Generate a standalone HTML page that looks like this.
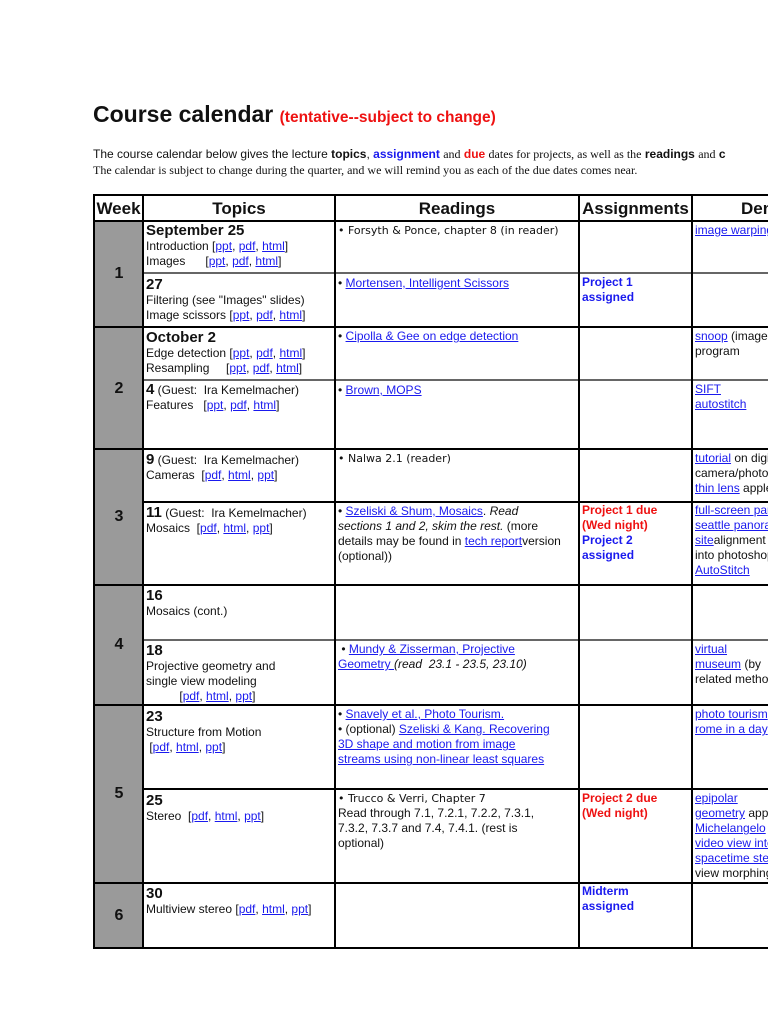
<!DOCTYPE html>
<html><head><meta charset="utf-8"><style>
html,body{margin:0;padding:0;overflow:hidden;width:768px;height:1024px}
#w{position:relative;width:768px;height:1024px;overflow:hidden;background:#fff;font-family:"Liberation Sans",sans-serif;color:#111}
.a{position:absolute;white-space:nowrap}
.t{font-size:12px;line-height:15px}
a{color:#1a1aee;text-decoration:underline}
.d{font-size:15px;font-weight:bold;line-height:17px}
.h{position:absolute;background:#000;height:2px}
.v{position:absolute;background:#000;width:2px}
.g{background:#666}
.wk{position:absolute;background:#9a9a9a;left:95px;width:48px}
.wn{position:absolute;left:95px;width:48px;text-align:center;font-weight:bold;font-size:16px}
.bl{color:#1a1aee;font-weight:bold}
.rd{color:#ee1111;font-weight:bold}
.hd{font-size:17px;font-weight:bold;text-align:center;position:absolute;top:199px}
</style></head><body><div id="w">
<div class="a" style="left:93px;top:101px;font-size:23px;font-weight:bold">Course calendar <span style="font-size:15.5px;color:#ee1111">(tentative--subject to change)</span></div>
<div class="a t" style="left:93px;top:147px">The course calendar below gives the lecture <b>topics</b>, <b style="color:#1a1aee">assignment</b> <span style="font-family:'Liberation Serif',serif">and</span> <b style="color:#ee1111">due</b> <span style="font-family:'Liberation Serif',serif">dates for projects, as well as the</span> <b>readings</b> <span style="font-family:'Liberation Serif',serif">and</span> <b>c</b></div>
<div class="a t" style="left:93px;top:163px;font-family:'Liberation Serif',serif">The calendar is subject to change during the quarter, and we will remind you as each of the due dates comes near.</div>

<div class="wk" style="top:221px;height:106px"></div>
<div class="wk" style="top:327px;height:122px"></div>
<div class="wk" style="top:449px;height:136px"></div>
<div class="wk" style="top:585px;height:120px"></div>
<div class="wk" style="top:705px;height:178px"></div>
<div class="wk" style="top:883px;height:65px"></div>
<div class="wn" style="top:265px">1</div>
<div class="wn" style="top:380px">2</div>
<div class="wn" style="top:508px">3</div>
<div class="wn" style="top:636px">4</div>
<div class="wn" style="top:785px">5</div>
<div class="wn" style="top:907px">6</div>

<div class="h" style="left:93px;width:675px;top:194px"></div>
<div class="h" style="left:93px;width:675px;top:220px"></div>
<div class="h g" style="left:143px;width:625px;top:272px"></div>
<div class="h" style="left:93px;width:675px;top:326px"></div>
<div class="h g" style="left:143px;width:625px;top:379px"></div>
<div class="h" style="left:93px;width:675px;top:448px"></div>
<div class="h" style="left:143px;width:625px;top:501px"></div>
<div class="h" style="left:93px;width:675px;top:584px"></div>
<div class="h g" style="left:143px;width:625px;top:639px"></div>
<div class="h" style="left:93px;width:675px;top:704px"></div>
<div class="h" style="left:143px;width:625px;top:788px"></div>
<div class="h" style="left:93px;width:675px;top:882px"></div>
<div class="h" style="left:93px;width:675px;top:947px"></div>
<div class="v" style="left:93px;top:194px;height:755px"></div>
<div class="v" style="left:142px;top:194px;height:755px"></div>
<div class="v" style="left:334px;top:194px;height:755px"></div>
<div class="v" style="left:578px;top:194px;height:755px"></div>
<div class="v" style="left:691px;top:194px;height:755px"></div>

<div class="hd" style="left:95px;width:47px">Week</div>
<div class="hd" style="left:144px;width:190px">Topics</div>
<div class="hd" style="left:336px;width:242px">Readings</div>
<div class="hd" style="left:580px;width:111px">Assignments</div>
<div class="hd" style="left:741px;width:60px;text-align:left">Demos</div>

<div class="a" style="left:146px;top:222px"><div class="d">September 25</div><div class="t">Introduction [<a>ppt</a>, <a>pdf</a>, <a>html</a>]<br>Images &nbsp;&nbsp;&nbsp;&nbsp;&nbsp;[<a>ppt</a>, <a>pdf</a>, <a>html</a>]</div></div>
<div class="a" style="left:146px;top:276px"><div class="d">27</div><div class="t">Filtering (see "Images" slides)<br>Image scissors [<a>ppt</a>, <a>pdf</a>, <a>html</a>]</div></div>
<div class="a" style="left:146px;top:329px"><div class="d">October 2</div><div class="t">Edge detection [<a>ppt</a>, <a>pdf</a>, <a>html</a>]<br>Resampling &nbsp;&nbsp;&nbsp;&nbsp;[<a>ppt</a>, <a>pdf</a>, <a>html</a>]</div></div>
<div class="a" style="left:146px;top:382px"><div class="t"><b style="font-size:15px">4</b> (Guest:&nbsp; Ira Kemelmacher)<br>Features &nbsp;&nbsp;[<a>ppt</a>, <a>pdf</a>, <a>html</a>]</div></div>
<div class="a" style="left:146px;top:452px"><div class="t"><b style="font-size:15px">9</b> (Guest:&nbsp; Ira Kemelmacher)<br>Cameras &nbsp;[<a>pdf</a>, <a>html</a>, <a>ppt</a>]</div></div>
<div class="a" style="left:146px;top:505px"><div class="t"><b style="font-size:15px">11</b> (Guest:&nbsp; Ira Kemelmacher)<br>Mosaics &nbsp;[<a>pdf</a>, <a>html</a>, <a>ppt</a>]</div></div>
<div class="a" style="left:146px;top:587px"><div class="d">16</div><div class="t">Mosaics (cont.)</div></div>
<div class="a" style="left:146px;top:642px"><div class="d">18</div><div class="t">Projective geometry and<br>single view modeling<br>&nbsp;&nbsp;&nbsp;&nbsp;&nbsp;&nbsp;&nbsp;&nbsp;&nbsp;&nbsp;[<a>pdf</a>, <a>html</a>, <a>ppt</a>]</div></div>
<div class="a" style="left:146px;top:708px"><div class="d">23</div><div class="t">Structure from Motion<br>&nbsp;[<a>pdf</a>, <a>html</a>, <a>ppt</a>]</div></div>
<div class="a" style="left:146px;top:792px"><div class="d">25</div><div class="t">Stereo &nbsp;[<a>pdf</a>, <a>html</a>, <a>ppt</a>]</div></div>
<div class="a" style="left:146px;top:885px"><div class="d">30</div><div class="t">Multiview stereo [<a>pdf</a>, <a>html</a>, <a>ppt</a>]</div></div>

<div class="a t" style="left:338px;top:223px;font-family:'DejaVu Sans',sans-serif;font-size:11px">• Forsyth &amp; Ponce, chapter 8 (in reader)</div>
<div class="a t" style="left:338px;top:276px">• <a>Mortensen, Intelligent Scissors</a></div>
<div class="a t" style="left:338px;top:329px">• <a>Cipolla &amp; Gee on edge detection</a></div>
<div class="a t" style="left:338px;top:383px">• <a>Brown, MOPS</a></div>
<div class="a t" style="left:338px;top:451px;font-family:'DejaVu Sans',sans-serif;font-size:11px">• Nalwa 2.1 (reader)</div>
<div class="a t" style="left:338px;top:504px">• <a>Szeliski &amp; Shum, Mosaics</a>. <i>Read<br>sections 1 and 2, skim the rest.</i> (more<br>details may be found in <a>tech report</a>version<br>(optional))</div>
<div class="a t" style="left:338px;top:642px">&nbsp;• <a>Mundy &amp; Zisserman, Projective</a><br><a>Geometry </a><i>(read&nbsp; 23.1 - 23.5, 23.10)</i></div>
<div class="a t" style="left:338px;top:707px">• <a>Snavely et al., Photo Tourism.</a><br>• (optional) <a>Szeliski &amp; Kang. Recovering</a><br><a>3D shape and motion from image</a><br><a>streams using non-linear least squares</a></div>
<div class="a t" style="left:338px;top:791px"><span style="font-family:'DejaVu Sans',sans-serif;font-size:11px">• Trucco &amp; Verri, Chapter 7</span><br>Read through 7.1, 7.2.1, 7.2.2, 7.3.1,<br>7.3.2, 7.3.7 and 7.4, 7.4.1. (rest is<br>optional)</div>

<div class="a t" style="left:582px;top:275px"><span class="bl">Project 1<br>assigned</span></div>
<div class="a t" style="left:582px;top:503px"><span class="rd">Project 1 due<br>(Wed night)</span><br><span class="bl">Project 2<br>assigned</span></div>
<div class="a t" style="left:582px;top:791px"><span class="rd">Project 2 due<br>(Wed night)</span></div>
<div class="a t" style="left:582px;top:884px"><span class="bl">Midterm<br>assigned</span></div>

<div class="a t" style="left:695px;top:223px"><a>image warping</a></div>
<div class="a t" style="left:695px;top:329px"><a>snoop</a> (image<br>program</div>
<div class="a t" style="left:695px;top:382px"><a>SIFT</a><br><a>autostitch</a></div>
<div class="a t" style="left:695px;top:451px"><a>tutorial</a> on digital<br>camera/photo<br><a>thin lens</a> applet</div>
<div class="a t" style="left:695px;top:503px"><a>full-screen panoramas</a><br><a>seattle panoramas</a><br><a>site</a>alignment<br>into photoshop<br><a>AutoStitch</a></div>
<div class="a t" style="left:695px;top:642px"><a>virtual</a><br><a>museum</a> (by<br>related methods</div>
<div class="a t" style="left:695px;top:707px"><a>photo tourism</a><br><a>rome in a day</a></div>
<div class="a t" style="left:695px;top:791px"><a>epipolar</a><br><a>geometry</a> applet<br><a>Michelangelo</a><br><a>video view interp</a><br><a>spacetime stereo</a><br>view morphing</div>
</div></body></html>
